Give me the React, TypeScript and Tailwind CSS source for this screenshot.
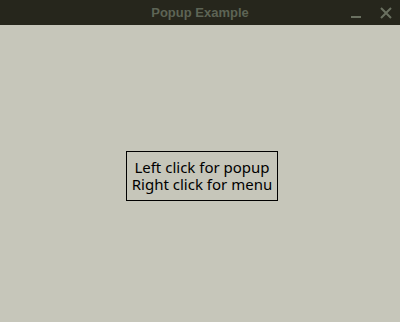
export default function App() {
  return (
    <div className="w-[400px] h-[322px] flex flex-col bg-[#c6c6ba] overflow-hidden" style={{ fontFamily: '"Noto Sans", sans-serif' }}>
      <div className="h-[25px] bg-[#26261c] relative flex items-center justify-center shrink-0">
        <span className="text-[13px] font-bold text-[#5d6455]" style={{ fontFamily: '"Liberation Sans", sans-serif' }}>Popup Example</span>
        <div className="absolute right-0 top-0 h-full flex items-center">
          <span className="w-[30px] flex justify-center">
            <span className="block w-[10px] h-[2px] bg-[#6a7060] mt-[8px]" />
          </span>
          <span className="w-[29px] flex justify-center">
            <svg width="12" height="12" viewBox="0 0 12 12">
              <path d="M1 1 L11 11 M11 1 L1 11" stroke="#6a7060" strokeWidth="2" />
            </svg>
          </span>
        </div>
      </div>
      <div className="flex-1 flex items-center justify-center">
        <div className="border border-black w-[152px] h-[50px] flex flex-col justify-center text-[15px] leading-[17px] text-black text-center mt-[5px] ml-[4px]">
          <div>Left click for popup</div>
          <div>Right click for menu</div>
        </div>
      </div>
    </div>
  );
}
